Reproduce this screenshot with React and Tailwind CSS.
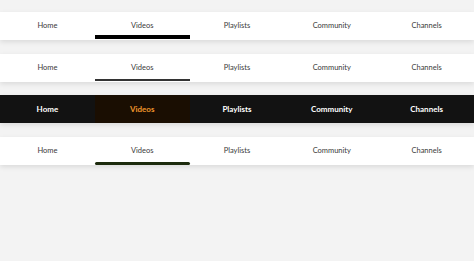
const tabs = ["Home", "Videos", "Playlists", "Community", "Channels"];

function Nav({ variant }) {
  const dark = variant === "dark";
  return (
    <nav
      className={`flex h-[28px] shadow-[0_2px_5px_rgba(0,0,0,0.1)] ${
        dark ? "bg-[#121212]" : "bg-white"
      }`}
    >
      {tabs.map((t) => {
        const active = t === "Videos";
        let cls = "relative flex-1 flex items-center justify-center";
        if (dark) {
          cls += active
            ? " bg-[#1a0e02] text-[#f0962c] font-bold text-[8px]"
            : " text-white font-bold text-[8px]";
        } else {
          cls += " text-[#3a3a3a] text-[7.5px]";
        }
        return (
          <div key={t} className={cls}>
            {t}
            {active && variant === "thick" && (
              <span className="absolute left-0 right-0 bottom-[1px] h-[4px] bg-black" />
            )}
            {active && variant === "thin" && (
              <span className="absolute left-0 right-0 bottom-[1px] h-[2px] bg-[#333]" />
            )}
            {active && variant === "round" && (
              <span className="absolute left-0 right-0 bottom-0 h-[3px] rounded-full bg-[#1c2a0c]" />
            )}
          </div>
        );
      })}
    </nav>
  );
}

export default function App() {
  return (
    <div
      className="w-[474px] h-[261px] bg-[#f3f3f3] pt-3 flex flex-col gap-[13.5px]"
      style={{ fontFamily: 'Lato, "Open Sans", sans-serif' }}
    >
      <Nav variant="thick" />
      <Nav variant="thin" />
      <Nav variant="dark" />
      <Nav variant="round" />
    </div>
  );
}
